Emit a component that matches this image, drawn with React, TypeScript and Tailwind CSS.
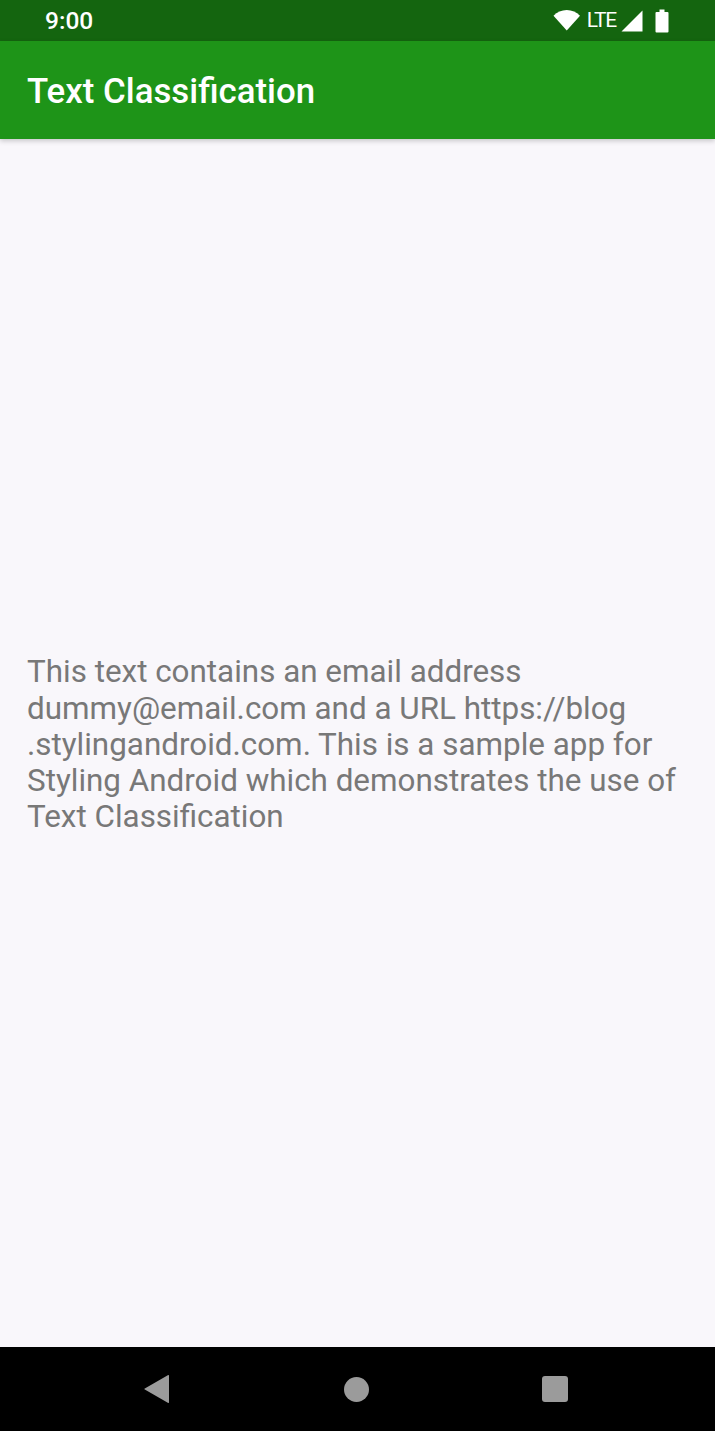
export default function App() {
  return (
    <div className="flex h-[1431px] w-[715px] flex-col overflow-hidden bg-[#f9f7fb] font-['Roboto',sans-serif]">
      {/* Status bar */}
      <div className="flex h-[41px] shrink-0 items-center bg-[#14650f] pl-[45px] pr-[46px] text-white">
        <span className="pt-[2px] text-[24.5px] font-medium leading-none">9:00</span>
        <div className="ml-auto flex items-center">
          <svg width="28" height="22" viewBox="0 0 28 22" className="mr-[6px] -mt-[2px]">
            <path d="M13.750 21.500 0.500 6.800C4 3.100 8.600 1 13.750 1s9.750 2.100 13.250 5.800z" fill="#fff" />
          </svg>
          <span className="mr-[5px] text-[21px] font-normal leading-none tracking-[-1.2px]">LTE</span>
          <svg width="22" height="22" viewBox="0 0 22 22" className="mr-[12px]">
            <path d="M0.500 21.500 21.500 0.500v21z" fill="#fff" />
          </svg>
          <svg width="14" height="24" viewBox="0 0 14 24">
            <path d="M4.500 0.500h5v2.500h3a1 1 0 0 1 1 1v18.500a1 1 0 0 1-1 1h-11a1 1 0 0 1-1-1V4a1 1 0 0 1 1-1h3z" fill="#fff" />
          </svg>
        </div>
      </div>

      {/* App bar */}
      <div className="z-10 flex h-[98px] shrink-0 items-center bg-[#1e9418] px-[27px] shadow-[0_2px_5px_rgba(0,0,0,0.2)]">
        <h1 className="pt-[4px] text-[34.85px] font-medium leading-none text-white">Text Classification</h1>
      </div>

      {/* Content */}
      <div className="flex flex-1 items-center px-[27px]">
        <p className="whitespace-nowrap pt-[4px] text-[31.4px] leading-[36.3px] text-[#787878]">
          This text contains an email address
          <br />
          dummy@email.com and a URL https://blog
          <br />
          .stylingandroid.com. This is a sample app for
          <br />
          Styling Android which demonstrates the use of
          <br />
          Text Classification
        </p>
      </div>

      {/* Navigation bar */}
      <div className="flex h-[84px] shrink-0 items-center bg-black">
        <div className="flex w-full items-center">
          <svg width="26" height="28" viewBox="0 0 26 28" className="ml-[144px]">
            <path d="M25 0.800v26.400a0.800 0.800 0 0 1-1.200 0.600L0.800 14.600a0.700 0.700 0 0 1 0-1.200L23.800 0.200A0.800 0.800 0 0 1 25 0.800z" fill="#9b9b9b" />
          </svg>
          <div className="ml-[174px] h-[25px] w-[25px] rounded-full bg-[#9b9b9b]" />
          <div className="ml-[173px] h-[26px] w-[26px] rounded-[3px] bg-[#9b9b9b]" />
        </div>
      </div>
    </div>
  );
}
